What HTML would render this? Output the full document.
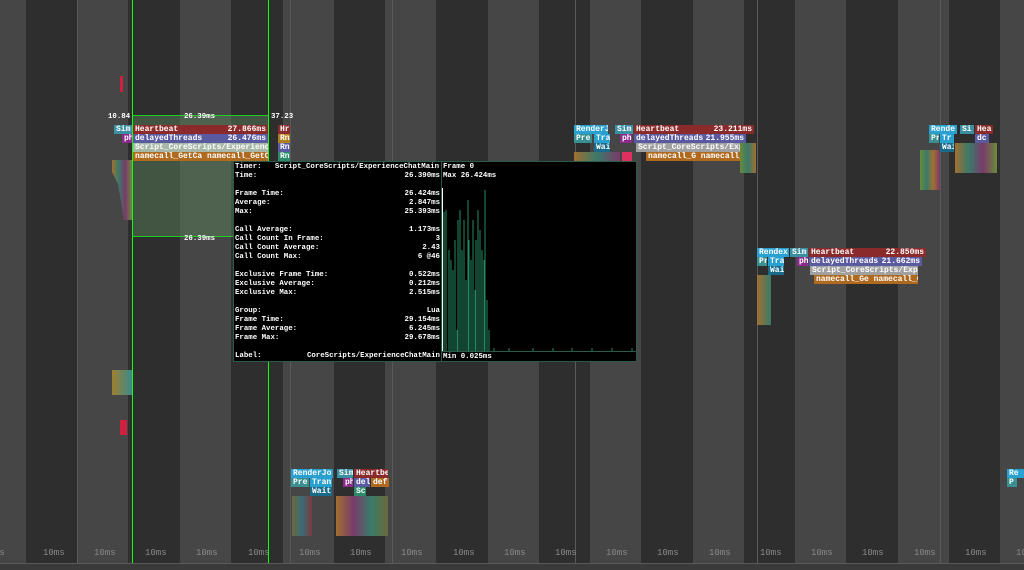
<!DOCTYPE html><html><head><style>
body{margin:0;width:1024px;height:570px;overflow:hidden;background:#2e2e2e;position:relative;font-family:"Liberation Mono",monospace;font-weight:bold;}
div{position:absolute;box-sizing:border-box}
.s{top:0;height:570px;width:51px;background:#464646}
.l{top:0;height:563px;width:1px;background:#5a5a5a}
.t{top:548px;font-size:9px;color:#8a8a8a;font-weight:normal}
.b{height:9px;font-size:8px;line-height:9px;color:#fff;white-space:nowrap;overflow:hidden;padding-left:2px}
.tt{font-size:7.4px;line-height:9px;color:#fff;white-space:pre}
</style></head><body>
<div class="s" style="left:0;width:26px"></div>
<div class="s" style="left:77px"></div><div class="s" style="left:180px"></div><div class="s" style="left:283px"></div><div class="s" style="left:385px"></div><div class="s" style="left:488px"></div><div class="s" style="left:590px"></div><div class="s" style="left:693px"></div><div class="s" style="left:795px"></div><div class="s" style="left:898px"></div><div class="s" style="left:1000px;width:24px"></div>
<div class="l" style="left:77px"></div><div class="l" style="left:290px"></div><div class="l" style="left:392px"></div><div class="l" style="left:575px"></div><div class="l" style="left:757px"></div><div class="l" style="left:940px"></div>
<div style="left:0;top:563px;width:1024px;height:7px;background:#3a3a3a;border-top:1px solid #5a5a5a"></div>
<div class="t" style="left:-6px">ms</div><div class="t" style="left:43px">10ms</div><div class="t" style="left:94px">10ms</div><div class="t" style="left:145px">10ms</div><div class="t" style="left:196px">10ms</div><div class="t" style="left:248px">10ms</div><div class="t" style="left:299px">10ms</div><div class="t" style="left:350px">10ms</div><div class="t" style="left:401px">10ms</div><div class="t" style="left:453px">10ms</div><div class="t" style="left:504px">10ms</div><div class="t" style="left:555px">10ms</div><div class="t" style="left:606px">10ms</div><div class="t" style="left:657px">10ms</div><div class="t" style="left:709px">10ms</div><div class="t" style="left:760px">10ms</div><div class="t" style="left:811px">10ms</div><div class="t" style="left:862px">10ms</div><div class="t" style="left:914px">10ms</div><div class="t" style="left:965px">10ms</div><div class="t" style="left:1016px">10</div>
<!-- selection -->
<div style="left:133px;top:115px;width:135px;height:122px;background:rgba(90,130,90,0.45);border-top:1px solid #2c2;border-bottom:1px solid #2c2"></div>
<div style="left:132px;top:0;width:1px;height:563px;background:#1f1"></div>
<div style="left:268px;top:0;width:1px;height:563px;background:#1f1"></div>
<div class="tt" style="left:108px;top:113px">10.84</div><div class="tt" style="left:184px;top:113px">26.39ms</div><div class="tt" style="left:271px;top:113px">37.23</div>
<div class="tt" style="left:184px;top:235px">26.39ms</div>
<div style="left:120px;top:76px;width:3px;height:16px;background:#d02040"></div>
<!-- stack 1 -->
<div class="b" style="left:114px;top:125px;width:18px;background:#3a8fa0">Sim</div>
<div class="b" style="left:133px;top:125px;width:135px;background:#8b2a2a">Heartbeat<span style="position:absolute;right:2px">27.866ms</span></div>
<div class="b" style="left:122px;top:134px;width:10px;background:#8a2a8a">ph</div>
<div class="b" style="left:133px;top:134px;width:135px;background:#5a5aa0">delayedThreads<span style="position:absolute;right:2px">26.476ms</span></div>
<div class="b" style="left:133px;top:143px;width:135px;background:#a8b8a8">Script_CoreScripts/Experience</div>
<div class="b" style="left:133px;top:152px;width:135px;background:#b06a20">namecall_GetCa namecall_GetCa</div>
<div class="b" style="left:278px;top:125px;width:12px;background:#8b2a2a">Hr</div><div class="b" style="left:278px;top:134px;width:12px;background:#b08020">Rn</div><div class="b" style="left:278px;top:143px;width:12px;background:#5a5aa0">Rn</div><div class="b" style="left:278px;top:152px;width:12px;background:#2a8a6a">Rn</div>
<div style="left:112px;top:160px;width:20px;height:60px;background:linear-gradient(90deg,#a07030,#3a7a6a,#7a3a6a,#6a8a3a);clip-path:polygon(0 0,100% 0,100% 100%,60% 100%,30% 40%,0 20%)"></div>
<!-- stack 2 -->
<div class="b" style="left:574px;top:125px;width:34px;background:#2aa0d0">RenderJ</div><div class="b" style="left:615px;top:125px;width:18px;background:#3a8fa0">Sim</div>
<div class="b" style="left:634px;top:125px;width:120px;background:#8b2a2a">Heartbeat<span style="position:absolute;right:2px">23.211ms</span></div>
<div class="b" style="left:574px;top:134px;width:18px;background:#3a9090">Pre</div><div class="b" style="left:594px;top:134px;width:16px;background:#2aa0d0">Tra</div><div class="b" style="left:620px;top:134px;width:12px;background:#8a2a8a">ph</div>
<div class="b" style="left:634px;top:134px;width:112px;background:#5a5aa0">delayedThreads<span style="position:absolute;right:2px">21.955ms</span></div>
<div class="b" style="left:594px;top:143px;width:16px;background:#1a6a8a">Wai</div>
<div class="b" style="left:636px;top:143px;width:104px;background:#a0a0a0">Script_CoreScripts/Expe</div>
<div class="b" style="left:646px;top:152px;width:96px;background:#b06a20">namecall_G namecall_G</div>
<div style="left:622px;top:152px;width:10px;height:9px;background:#e03060"></div>
<div style="left:574px;top:152px;width:46px;height:30px;background:linear-gradient(90deg,#a07030,#3a7a6a,#7a3a6a)"></div>
<div style="left:740px;top:143px;width:16px;height:30px;background:linear-gradient(90deg,#6a8a3a,#3a7a6a,#a07030)"></div>
<!-- stack 3 -->
<div class="b" style="left:757px;top:248px;width:32px;background:#2aa0d0">Rendex</div><div class="b" style="left:790px;top:248px;width:18px;background:#3a8fa0">Sim</div>
<div class="b" style="left:809px;top:248px;width:117px;background:#8b2a2a">Heartbeat<span style="position:absolute;right:2px">22.850ms</span></div>
<div class="b" style="left:757px;top:257px;width:10px;background:#3a9090">Pr</div><div class="b" style="left:768px;top:257px;width:16px;background:#2aa0d0">Tra</div><div class="b" style="left:797px;top:257px;width:11px;background:#8a2a8a">ph</div>
<div class="b" style="left:809px;top:257px;width:113px;background:#5a5aa0">delayedThreads<span style="position:absolute;right:2px">21.662ms</span></div>
<div class="b" style="left:768px;top:266px;width:16px;background:#1a6a8a">Wai</div>
<div class="b" style="left:810px;top:266px;width:108px;background:#a0a0a0">Script_CoreScripts/Expe</div>
<div class="b" style="left:814px;top:275px;width:104px;background:#b06a20">namecall_Ge namecall_G</div>
<div style="left:757px;top:275px;width:14px;height:50px;background:linear-gradient(90deg,#a07030,#3a7a6a)"></div>
<div style="left:920px;top:150px;width:20px;height:40px;background:linear-gradient(90deg,#6a8a3a,#3a7a6a,#a07030,#7a3a6a)"></div>
<!-- stack 4 -->
<div class="b" style="left:929px;top:125px;width:28px;background:#2aa0d0">Rende</div><div class="b" style="left:960px;top:125px;width:14px;background:#3a8fa0">Si</div><div class="b" style="left:975px;top:125px;width:18px;background:#8b2a2a">Hea</div>
<div class="b" style="left:929px;top:134px;width:10px;background:#3a9090">Pr</div><div class="b" style="left:940px;top:134px;width:14px;background:#2aa0d0">Tr</div><div class="b" style="left:975px;top:134px;width:14px;background:#5a5aa0">dc</div>
<div class="b" style="left:940px;top:143px;width:14px;background:#1a6a8a">Wai</div>
<div style="left:955px;top:143px;width:42px;height:30px;background:linear-gradient(90deg,#a07030,#3a7a6a,#7a3a6a,#6a8a3a)"></div>
<!-- stack 5 -->
<div class="b" style="left:291px;top:469px;width:42px;background:#2aa0d0">RenderJo</div><div class="b" style="left:337px;top:469px;width:16px;background:#3a8fa0">Sim</div><div class="b" style="left:354px;top:469px;width:34px;background:#8b2a2a">Heartbe</div>
<div class="b" style="left:291px;top:478px;width:18px;background:#3a9090">Pre</div><div class="b" style="left:310px;top:478px;width:22px;background:#2aa0d0">Tran</div><div class="b" style="left:343px;top:478px;width:10px;background:#8a2a8a">ph</div><div class="b" style="left:354px;top:478px;width:16px;background:#5a5aa0">del</div><div class="b" style="left:371px;top:478px;width:18px;background:#b06a20">def</div>
<div class="b" style="left:310px;top:487px;width:22px;background:#1a6a8a">Wait</div><div class="b" style="left:354px;top:487px;width:12px;background:#2a8a6a">Sc</div>
<div class="b" style="left:1007px;top:469px;width:17px;background:#2aa0d0">Re</div><div class="b" style="left:1007px;top:478px;width:10px;background:#3a9090">P</div>
<div style="left:336px;top:496px;width:52px;height:40px;background:linear-gradient(90deg,#a07030,#7a3a6a,#3a7a6a,#6a6a3a)"></div>
<div style="left:292px;top:496px;width:20px;height:40px;background:linear-gradient(90deg,#6a6a3a,#3a6a7a,#7a3a3a)"></div>
<div style="left:112px;top:370px;width:20px;height:25px;background:linear-gradient(90deg,#a08030,#3a8a8a)"></div>
<div style="left:120px;top:420px;width:7px;height:15px;background:#d02040"></div>
<!-- tooltip -->
<div style="left:233px;top:161px;width:404px;height:201px;background:#000;border:1px solid #2a5a48"></div>
<div style="left:441px;top:162px;width:1px;height:199px;background:#2a5a48"></div>
<div class="tt" style="left:235px;top:163px">Timer:   Script_CoreScripts/ExperienceChatMain
Time:

Frame Time:
Average:
Max:

Call Average:
Call Count In Frame:
Call Count Average:
Call Count Max:

Exclusive Frame Time:
Exclusive Average:
Exclusive Max:

Group:
Frame Time:
Frame Average:
Frame Max:

Label:</div>
<div class="tt" style="left:290px;top:163px;width:150px;text-align:right">
26.390ms

26.424ms
2.847ms
25.393ms

1.173ms
3
2.43
6 @46

0.522ms
0.212ms
2.515ms

Lua
29.154ms
6.245ms
29.678ms

CoreScripts/ExperienceChatMain</div>
<div class="tt" style="left:443px;top:163px">Frame 0
Max 26.424ms</div>
<div class="tt" style="left:443px;top:353px">Min 0.025ms</div>
<svg style="position:absolute;left:442px;top:180px" width="194" height="172"><g stroke="#2a9a70" stroke-width="0.9">
<path d="M2 172V32M4 172V30M7 172V70M9 172V80M11 172V90M13 172V60M15 172V150M16 172V40M18 172V30M20 172V70M22 172V40M24 172V100M26 172V20M27 172V60M29 172V80M31 172V40M33 172V110M34 172V60M36 172V30M38 172V50M40 172V70M42 172V80M43 172V10M45 172V120M47 172V150M52 172V168M67 172V168M91 172V168M111 172V168M130 172V168M150 172V168M170 172V168M190 172V168"/></g>
<path d="M0.5 8V172" stroke="#fff"/><path d="M0 171.5H194" stroke="#2a5a48"/></svg>
</body></html>
